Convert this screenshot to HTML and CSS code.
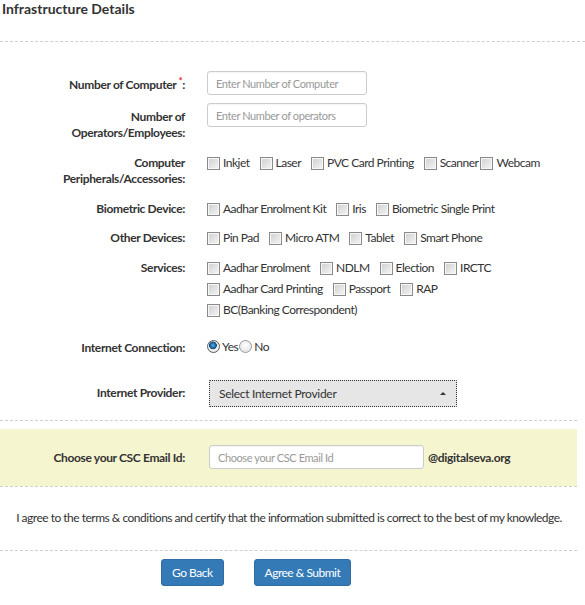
FILE: index.html
```html
<!DOCTYPE html>
<html lang="en">
<head>
<meta charset="utf-8">
<title>Infrastructure Details</title>
<link rel="stylesheet" href="styles.css">
</head>
<body>
<div class="page">
  <h2 class="title">Infrastructure Details</h2>
  <div class="sep sep-full"></div>

  <div class="main">
    <div class="row row-first">
      <label class="lbl">Number of Computer <span class="req">*</span>:</label>
      <div class="ctl"><input class="txt" type="text" placeholder="Enter Number of Computer"></div>
    </div>
    <div class="row row-second">
      <label class="lbl">Number of<br>Operators/Employees:</label>
      <div class="ctl"><input class="txt" type="text" placeholder="Enter Number of operators"></div>
    </div>
    <div class="row row-opts">
      <label class="lbl lbl-flush">Computer<br>Peripherals/Accessories:</label>
      <div class="ctl">
        <div class="optline">
          <label class="opt"><input type="checkbox" class="cb">Inkjet</label>
          <label class="opt"><input type="checkbox" class="cb">Laser</label>
          <label class="opt"><input type="checkbox" class="cb">PVC Card Printing</label>
          <label class="opt opt-tight"><input type="checkbox" class="cb">Scanner</label>
          <label class="opt"><input type="checkbox" class="cb">Webcam</label>
        </div>
      </div>
    </div>
    <div class="row row-opts">
      <label class="lbl lbl-flush">Biometric Device:</label>
      <div class="ctl">
        <div class="optline">
          <label class="opt"><input type="checkbox" class="cb">Aadhar Enrolment Kit</label>
          <label class="opt"><input type="checkbox" class="cb">Iris</label>
          <label class="opt"><input type="checkbox" class="cb">Biometric Single Print</label>
        </div>
      </div>
    </div>
    <div class="row row-opts row-other">
      <label class="lbl lbl-flush">Other Devices:</label>
      <div class="ctl">
        <div class="optline">
          <label class="opt"><input type="checkbox" class="cb">Pin Pad</label>
          <label class="opt"><input type="checkbox" class="cb">Micro ATM</label>
          <label class="opt"><input type="checkbox" class="cb">Tablet</label>
          <label class="opt"><input type="checkbox" class="cb">Smart Phone</label>
        </div>
      </div>
    </div>
    <div class="row row-opts">
      <label class="lbl lbl-flush">Services:</label>
      <div class="ctl optlines">
        <div class="optline">
          <label class="opt"><input type="checkbox" class="cb">Aadhar Enrolment</label>
          <label class="opt"><input type="checkbox" class="cb">NDLM</label>
          <label class="opt"><input type="checkbox" class="cb">Election</label>
          <label class="opt"><input type="checkbox" class="cb">IRCTC</label>
        </div>
        <div class="optline">
          <label class="opt"><input type="checkbox" class="cb">Aadhar Card Printing</label>
          <label class="opt"><input type="checkbox" class="cb">Passport</label>
          <label class="opt"><input type="checkbox" class="cb">RAP</label>
        </div>
        <div class="optline">
          <label class="opt"><input type="checkbox" class="cb">BC(Banking Correspondent)</label>
        </div>
      </div>
    </div>
    <div class="row row-radio">
      <label class="lbl lbl-flush">Internet Connection:</label>
      <div class="ctl ctl-radio">
        <label class="ropt"><input type="radio" name="conn" class="rb" checked>Yes</label>
        <label class="ropt"><input type="radio" name="conn" class="rb">No</label>
      </div>
    </div>
    <div class="row row-select">
      <label class="lbl lbl-select">Internet Provider:</label>
      <div class="ctl">
        <div class="select"><span>Select Internet Provider</span><span class="caret"></span></div>
      </div>
    </div>

    <div class="sep sep-provider"></div>

    <div class="band">
      <div class="row row-email">
        <label class="lbl lbl-email">Choose your CSC Email Id:</label>
        <div class="ctl ctl-email">
          <input class="txt txt-email" type="text" placeholder="Choose your CSC Email Id">
          <span class="domain">@digitalseva.org</span>
        </div>
      </div>
    </div>
    <div class="sep"></div>

    <p class="agree">I agree to the terms &amp; conditions and certify that the information submitted is correct to the best of my knowledge.</p>
    <div class="sep sep-agree"></div>

    <div class="actions">
      <button class="btn" type="button">Go Back</button>
      <button class="btn" type="button">Agree &amp; Submit</button>
    </div>
  </div>
</div>
</body>
</html>
```

FILE: styles.css
```css
* { box-sizing: border-box; }

body {
  margin: 0;
  font-family: Lato, "Open Sans", "Liberation Sans", sans-serif;
  font-size: 12px;
  letter-spacing: -0.5px;
  color: #333;
  background: #fff;
}

.page { width: 585px; }

.title {
  margin: 0;
  padding-left: 2px;
  font-size: 14px;
  line-height: 18px;
  font-weight: 700;
  letter-spacing: 0;
  color: #333;
}

.sep {
  border-top: 1px dashed #cfcfcf;
  height: 0;
}
.sep-full { margin-top: 23px; width: 585px; }

.main { width: 577px; }

.row {
  display: grid;
  grid-template-columns: 185px 1fr;
  column-gap: 22px;
  margin-top: 14px;
}
.row-first { margin-top: 29px; }
.row-second { margin-top: 8px; }
.row-other { margin-top: 13px; }
.row-radio { margin-top: 22px; }
.row-select { margin-top: 24px; }

.lbl {
  text-align: right;
  font-weight: 700;
  letter-spacing: -0.35px;
  line-height: 16px;
  padding-top: 6px;
  color: #333;
}
.lbl-flush { padding-top: 0; }
.lbl-select { padding-top: 5px; }

.req {
  color: #e00;
  font-size: 9px;
  line-height: 0;
  vertical-align: super;
}

.txt {
  display: block;
  width: 160px;
  height: 24px;
  border: 1px solid #ccc;
  border-radius: 3px;
  padding: 0 8px;
  font-family: inherit;
  font-size: 11px;
  letter-spacing: -0.4px;
  color: #555;
  box-shadow: inset 0 1px 1px rgba(0,0,0,0.04);
}
.txt::placeholder { color: #999; }

.optlines { display: flex; flex-direction: column; gap: 5px; }
.optline { display: flex; line-height: 16px; }

.opt {
  display: flex;
  align-items: center;
  gap: 3px;
  margin-right: 10px;
  white-space: nowrap;
}
.opt-tight { margin-right: 2px; }

.cb {
  appearance: none;
  -webkit-appearance: none;
  margin: 0;
  width: 13px;
  height: 13px;
  border: 1px solid #8a8a8a;
  background: linear-gradient(135deg, #cfcfcf 0%, #e8e8e8 65%, #f6f6f6 100%);
  box-shadow: inset 0 0 0 1px #f7f7f7;
  flex: none;
}

.ctl-radio { display: flex; margin-top: -3px; line-height: 16px; }
.ropt { display: flex; align-items: center; gap: 2px; margin-right: 1px; }
.rb {
  appearance: none;
  -webkit-appearance: none;
  margin: 0;
  width: 13px;
  height: 13px;
  border-radius: 50%;
  border: 1px solid #9a9a9a;
  background: radial-gradient(circle at 50% 40%, #ffffff 0%, #e4e4e4 80%);
  flex: none;
}
.rb:checked {
  border-color: #5a5a5a;
  background: radial-gradient(circle at 45% 40%, #5fb4e8 0%, #1c6aa3 2.5px, #124a78 3.6px, #f2f2f2 4.2px, #dcdcdc 100%);
}

.select {
  margin-left: 2px;
  width: 248px;
  height: 27px;
  background: #e6e6e6;
  border: 1px dotted #333;
  border-radius: 1px;
  display: flex;
  align-items: center;
  justify-content: space-between;
  padding: 0 10px 0 9px;
  color: #333;
  letter-spacing: -0.3px;
}
.caret {
  width: 0;
  height: 0;
  border-left: 3px solid transparent;
  border-right: 3px solid transparent;
  border-bottom: 3px solid #333;
}

.sep-provider { margin-top: 13px; }

.band {
  margin-top: 8px;
  height: 57px;
  background: #f5f5cf;
  padding-top: 16px;
}
.row-email { margin-top: 0; }
.lbl-email { padding-top: 5px; }
.ctl-email { display: flex; align-items: center; margin-left: 2px; }
.txt-email { width: 215px; }
.domain { font-weight: 700; margin-left: 4px; letter-spacing: -0.3px; }

.agree {
  margin: 23px 0 0;
  text-align: center;
  line-height: 16px;
  color: #333;
  white-space: nowrap;
  padding-left: 1px;
}
.sep-agree { margin-top: 24px; }

.actions {
  display: flex;
  gap: 30px;
  margin-top: 8px;
  padding-left: 161px;
}
.btn {
  height: 27px;
  padding: 0 10px;
  background: #337ab7;
  border: 1px solid #2e6da4;
  border-radius: 3px;
  color: #fff;
  font-family: inherit;
  font-size: 12px;
  letter-spacing: -0.5px;
}
```
